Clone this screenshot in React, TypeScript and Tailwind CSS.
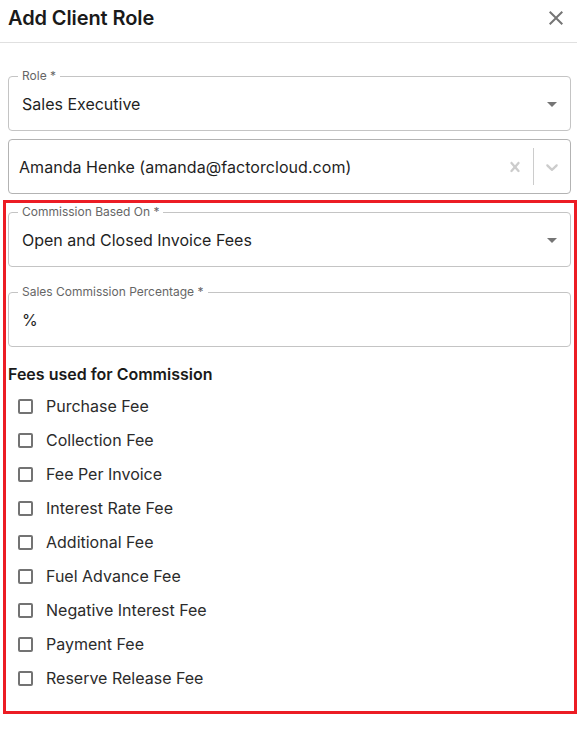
import React from "react";

const fees = [
  "Purchase Fee",
  "Collection Fee",
  "Fee Per Invoice",
  "Interest Rate Fee",
  "Additional Fee",
  "Fuel Advance Fee",
  "Negative Interest Fee",
  "Payment Fee",
  "Reserve Release Fee",
];

function CaretDown() {
  return (
    <svg viewBox="0 0 24 24" className="w-6 h-6 fill-[#757575] shrink-0">
      <path d="M7 10l5 5 5-5z" />
    </svg>
  );
}

// MUI-style outlined field with a notched label
function OutlinedField({ label, value, select }: { label: string; value: string; select?: boolean }) {
  return (
    <div className="relative h-[55px] border border-[#c4c4c4] rounded-[4px] flex items-center pl-[13px] pr-[6px]">
      <span className="absolute left-[9px] top-[-8px] px-[4px] bg-white text-[12px] leading-[14px] text-[#666666]">
        {label}
      </span>
      <span className="flex-1 text-[16px] text-[#1f1f1f]">{value}</span>
      {select && <CaretDown />}
    </div>
  );
}

export default function App() {
  return (
    <div className="w-[577px] min-h-[729px] bg-white font-['Inter','Noto_Sans',sans-serif]">
      {/* Header */}
      <div className="h-[43px] border-b border-[#e0e0e0] flex items-center justify-between pl-[8px] pr-[9px] pb-[6px]">
        <h2 className="text-[20px] font-semibold text-[#1a1a1a] tracking-[-0.1px]">Add Client Role</h2>
        <svg viewBox="0 0 24 24" className="w-6 h-6 fill-[#757575]">
          <path d="M19 6.41 17.59 5 12 10.59 6.41 5 5 6.41 10.59 12 5 17.59 6.41 19 12 13.41 17.59 19 19 17.59 13.41 12z" />
        </svg>
      </div>

      <div className="pl-[8px] pr-[6px] pt-[33px] flex flex-col">
        <OutlinedField label="Role *" value="Sales Executive" select />

        {/* react-select style user picker */}
        <div className="mt-[8px] h-[55px] border border-[#b3b3b3] rounded-[4px] flex items-center pl-[10px]">
          <span className="flex-1 text-[16px] text-[#1f1f1f] tracking-[0.05px]">Amanda Henke (amanda@factorcloud.com)</span>
          <div className="flex items-stretch self-stretch">
            <div className="flex items-center px-[8px]">
              <svg viewBox="0 0 20 20" className="w-5 h-5 fill-[#cccccc]">
                <path d="M14.348 14.849c-0.469 0.469-1.229 0.469-1.697 0l-2.651-3.030-2.651 3.029c-0.469 0.469-1.229 0.469-1.697 0-0.469-0.469-0.469-1.229 0-1.697l2.758-3.15-2.759-3.152c-0.469-0.469-0.469-1.228 0-1.697s1.228-0.469 1.697 0l2.652 3.031 2.651-3.031c0.469-0.469 1.228-0.469 1.697 0s0.469 1.229 0 1.697l-2.758 3.152 2.758 3.15c0.469 0.469 0.469 1.229 0 1.698z" />
              </svg>
            </div>
            <span className="w-px bg-[#cccccc] my-[8px]" />
            <div className="flex items-center px-[8px]">
              <svg viewBox="0 0 20 20" className="w-5 h-5 fill-[#cccccc]">
                <path d="M4.516 7.548c0.436-0.446 1.043-0.481 1.576 0l3.908 3.747 3.908-3.747c0.533-0.481 1.141-0.446 1.574 0 0.436 0.445 0.408 1.197 0 1.615-0.406 0.418-4.695 4.502-4.695 4.502-0.217 0.223-0.502 0.335-0.787 0.335s-0.57-0.112-0.789-0.335c0 0-4.287-4.084-4.695-4.502s-0.436-1.170 0-1.615z" />
              </svg>
            </div>
          </div>
        </div>

        {/* Highlighted commission section */}
        <div className="mt-[6px] ml-[-5px] mr-[-6px] border-[3px] border-[#ec1c24] pl-[2px] pr-[3px] pt-[9px] pb-[16px] flex flex-col">
          <OutlinedField label="Commission Based On *" value="Open and Closed Invoice Fees" select />
          <div className="mt-[25px]">
            <OutlinedField label="Sales Commission Percentage *" value="%" />
          </div>

          <h3 className="mt-[15px] text-[16px] leading-[24px] font-semibold text-[#1a1a1a]">Fees used for Commission</h3>
          <div className="mt-[3px] flex flex-col">
            {fees.map((fee) => (
              <label key={fee} className="h-[34px] flex items-center pl-[10px] gap-[13px]">
                <span className="w-[15px] h-[15px] border-2 border-[#737373] rounded-[2px] shrink-0" />
                <span className="text-[16px] text-[#2b2b2b]">{fee}</span>
              </label>
            ))}
          </div>
        </div>
      </div>
    </div>
  );
}
